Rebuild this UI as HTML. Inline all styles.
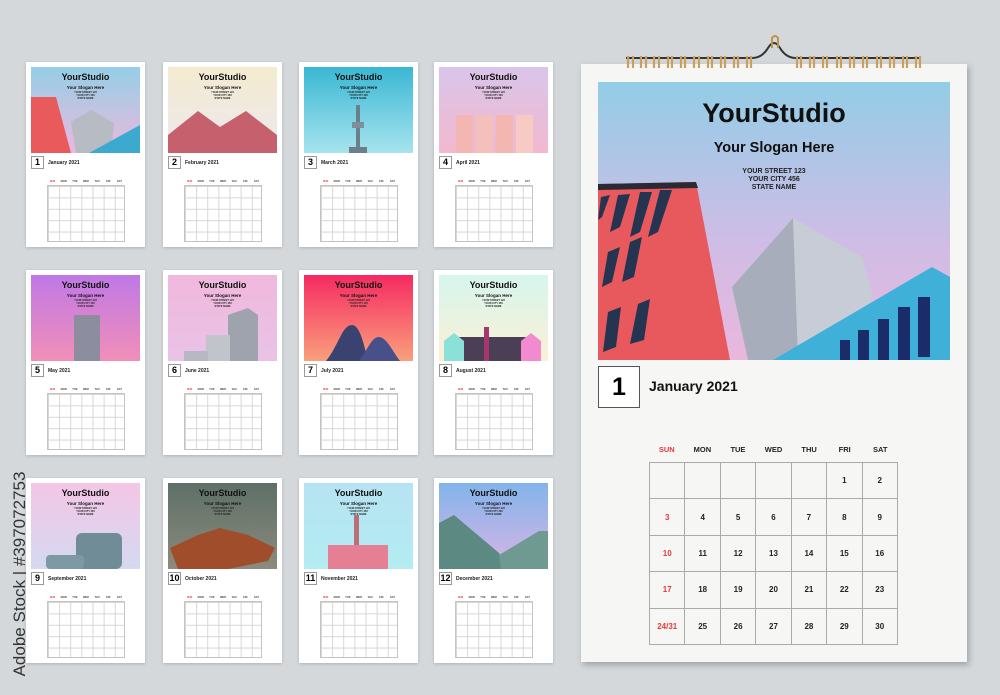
<!DOCTYPE html>
<html><head><meta charset="utf-8">
<style>
*{margin:0;padding:0;box-sizing:border-box}
body{width:1000px;height:695px;overflow:hidden;background:#d4d8db;font-family:"Liberation Sans",Arial,sans-serif;position:relative}
.card{position:absolute;width:119px;height:185px;background:#fff;box-shadow:0 1px 3px rgba(0,0,0,.18)}
.card svg.ph{position:absolute;left:5px;top:5px;width:109px;height:86px}
.card .t{position:absolute;left:5px;top:10px;width:109px;text-align:center;font-weight:bold;font-size:9px;color:#111}
.card .s{position:absolute;left:5px;top:23px;width:109px;text-align:center;font-weight:bold;font-size:4.5px;color:#111}
.card .a{position:absolute;left:5px;top:30px;width:109px;text-align:center;font-weight:bold;font-size:2.5px;line-height:2.8px;color:#222}
.card .n{position:absolute;left:5px;top:94px;width:13px;height:13px;border:1px solid #999;font-weight:bold;font-size:9px;text-align:center;line-height:11px;background:#fff}
.card .m{position:absolute;left:22px;top:98px;font-weight:bold;font-size:5px;color:#222}
.card .h{position:absolute;left:21px;top:118px;width:78px;height:3px;display:flex}
.card .h span{flex:1;font-size:2.6px;text-align:center;color:#444;font-weight:bold}
.card .h span:first-child{color:#e33}
.card .g{position:absolute;left:21px;top:123px;width:78px;height:57px;border:1px solid #c4c4c4;
background-image:linear-gradient(to right,#d6d6d6 1px,transparent 1px),linear-gradient(to bottom,#d6d6d6 1px,transparent 1px);background-size:11.14px 11.4px}
#main{position:absolute;left:581px;top:64px;width:386px;height:598px;background:#f6f6f5;box-shadow:2px 3px 6px rgba(0,0,0,.25)}
.grid{position:absolute;left:649px;top:462px;width:249px;height:182px;border-collapse:collapse}
.grid td{border:1.5px solid #aaa;width:35.6px;height:36.4px;text-align:center;font-weight:bold;font-size:8px;color:#222}
.grid td.r{color:#e03a3a}
.hd{position:absolute;left:649px;top:445px;width:249px;display:flex}
.hd span{flex:1;text-align:center;font-weight:bold;font-size:7.5px;color:#222}
.hd span:first-child{color:#e03a3a}
</style></head><body>

<div style="position:absolute;left:8px;top:458px;width:24px;height:232px">
<div style="position:absolute;left:12px;top:116px;transform:translate(-50%,-50%) rotate(-90deg);white-space:nowrap;font-family:'Liberation Sans',sans-serif;font-size:17px;color:#333">Adobe Stock | #397072753</div></div>

<svg width="0" height="0" style="position:absolute"><defs>
<linearGradient id="g1" x1="0" y1="0" x2="0" y2="1"><stop offset="0" stop-color="#95cfe6"/><stop offset="1" stop-color="#ebb8de"/></linearGradient>
<linearGradient id="g2" x1="0" y1="0" x2="0" y2="1"><stop offset="0" stop-color="#f4ebcf"/><stop offset="1" stop-color="#ece8f0"/></linearGradient>
<linearGradient id="g3" x1="0" y1="0" x2="0" y2="1"><stop offset="0" stop-color="#3ab7d3"/><stop offset="1" stop-color="#a6e4ee"/></linearGradient>
<linearGradient id="g4" x1="0" y1="0" x2="0" y2="1"><stop offset="0" stop-color="#d9c5ea"/><stop offset="1" stop-color="#f2b8cf"/></linearGradient>
<linearGradient id="g5" x1="0" y1="0" x2="0" y2="1"><stop offset="0" stop-color="#bf78e6"/><stop offset="1" stop-color="#f28fb8"/></linearGradient>
<linearGradient id="g6" x1="0" y1="0" x2="0" y2="1"><stop offset="0" stop-color="#f0b8dc"/><stop offset="1" stop-color="#e9c3e6"/></linearGradient>
<linearGradient id="g7" x1="0" y1="0" x2="0" y2="1"><stop offset="0" stop-color="#f62a62"/><stop offset="1" stop-color="#f9a07c"/></linearGradient>
<linearGradient id="g8" x1="0" y1="0" x2="0" y2="1"><stop offset="0" stop-color="#d6f6ee"/><stop offset="1" stop-color="#fbf0d4"/></linearGradient>
<linearGradient id="g9" x1="0" y1="0" x2="0" y2="1"><stop offset="0" stop-color="#f3c6e5"/><stop offset="1" stop-color="#d5d9f2"/></linearGradient>
<linearGradient id="g10" x1="0" y1="0" x2="0" y2="1"><stop offset="0" stop-color="#5d7068"/><stop offset="1" stop-color="#8c8a7c"/></linearGradient>
<linearGradient id="g11" x1="0" y1="0" x2="0" y2="1"><stop offset="0" stop-color="#b6e3f3"/><stop offset="1" stop-color="#b4ecf1"/></linearGradient>
<linearGradient id="g12" x1="0" y1="0" x2="0" y2="1"><stop offset="0" stop-color="#82b4ea"/><stop offset="1" stop-color="#d8b4e6"/></linearGradient>
</defs></svg>

<!-- Row 1 -->
<div class="card" style="left:26px;top:62px"><svg class="ph" viewBox="0 0 109 86"><rect width="109" height="86" fill="url(#g1)"/><polygon points="0,30 25,30 40,86 0,86" fill="#e95a5c"/><polygon points="40,55 60,43 83,56 80,86 45,86" fill="#b7bcc4"/><polygon points="58,86 109,58 109,86" fill="#3ca9cf"/></svg>
<div class="t">YourStudio</div><div class="s">Your Slogan Here</div><div class="a">YOUR STREET 123<br>YOUR CITY 456<br>STATE NAME</div>
<div class="n">1</div><div class="m">January 2021</div><div class="h"><span>SUN</span><span>MON</span><span>TUE</span><span>WED</span><span>THU</span><span>FRI</span><span>SAT</span></div><div class="g"></div></div>

<div class="card" style="left:163px;top:62px"><svg class="ph" viewBox="0 0 109 86"><rect width="109" height="86" fill="url(#g2)"/><polygon points="0,68 30,44 52,60 78,44 109,68 109,86 0,86" fill="#c5606c"/></svg>
<div class="t">YourStudio</div><div class="s">Your Slogan Here</div><div class="a">YOUR STREET 123<br>YOUR CITY 456<br>STATE NAME</div>
<div class="n">2</div><div class="m">February 2021</div><div class="h"><span>SUN</span><span>MON</span><span>TUE</span><span>WED</span><span>THU</span><span>FRI</span><span>SAT</span></div><div class="g"></div></div>

<div class="card" style="left:299px;top:62px"><svg class="ph" viewBox="0 0 109 86"><rect width="109" height="86" fill="url(#g3)"/><rect x="52" y="38" width="4" height="48" fill="#6a7f8a"/><rect x="48" y="55" width="12" height="6" fill="#7d8f98"/><rect x="45" y="80" width="18" height="6" fill="#6a7f8a"/></svg>
<div class="t">YourStudio</div><div class="s">Your Slogan Here</div><div class="a">YOUR STREET 123<br>YOUR CITY 456<br>STATE NAME</div>
<div class="n">3</div><div class="m">March 2021</div><div class="h"><span>SUN</span><span>MON</span><span>TUE</span><span>WED</span><span>THU</span><span>FRI</span><span>SAT</span></div><div class="g"></div></div>

<div class="card" style="left:434px;top:62px"><svg class="ph" viewBox="0 0 109 86"><rect width="109" height="86" fill="url(#g4)"/><rect x="17" y="48" width="17" height="38" fill="#f3b6b0"/><rect x="37" y="48" width="17" height="38" fill="#f5c0bb"/><rect x="57" y="48" width="17" height="38" fill="#f3b6b0"/><rect x="77" y="48" width="17" height="38" fill="#f7cac4"/></svg>
<div class="t">YourStudio</div><div class="s">Your Slogan Here</div><div class="a">YOUR STREET 123<br>YOUR CITY 456<br>STATE NAME</div>
<div class="n">4</div><div class="m">April 2021</div><div class="h"><span>SUN</span><span>MON</span><span>TUE</span><span>WED</span><span>THU</span><span>FRI</span><span>SAT</span></div><div class="g"></div></div>

<!-- Row 2 -->
<div class="card" style="left:26px;top:270px"><svg class="ph" viewBox="0 0 109 86"><rect width="109" height="86" fill="url(#g5)"/><rect x="43" y="40" width="26" height="46" fill="#8c8ea0"/></svg>
<div class="t">YourStudio</div><div class="s">Your Slogan Here</div><div class="a">YOUR STREET 123<br>YOUR CITY 456<br>STATE NAME</div>
<div class="n">5</div><div class="m">May 2021</div><div class="h"><span>SUN</span><span>MON</span><span>TUE</span><span>WED</span><span>THU</span><span>FRI</span><span>SAT</span></div><div class="g"></div></div>

<div class="card" style="left:163px;top:270px"><svg class="ph" viewBox="0 0 109 86"><rect width="109" height="86" fill="url(#g6)"/><polygon points="60,40 80,33 90,40 90,86 60,86" fill="#9ea3ad"/><rect x="38" y="60" width="24" height="26" fill="#c1c4cb"/><rect x="16" y="76" width="24" height="10" fill="#b6b9c2"/></svg>
<div class="t">YourStudio</div><div class="s">Your Slogan Here</div><div class="a">YOUR STREET 123<br>YOUR CITY 456<br>STATE NAME</div>
<div class="n">6</div><div class="m">June 2021</div><div class="h"><span>SUN</span><span>MON</span><span>TUE</span><span>WED</span><span>THU</span><span>FRI</span><span>SAT</span></div><div class="g"></div></div>

<div class="card" style="left:299px;top:270px"><svg class="ph" viewBox="0 0 109 86"><rect width="109" height="86" fill="url(#g7)"/><path d="M22,86 C35,70 38,50 48,50 C56,50 60,70 64,86 Z" fill="#3a4270"/><path d="M55,86 C65,72 68,62 75,62 C82,62 88,75 96,86 Z" fill="#47508a"/></svg>
<div class="t">YourStudio</div><div class="s">Your Slogan Here</div><div class="a">YOUR STREET 123<br>YOUR CITY 456<br>STATE NAME</div>
<div class="n">7</div><div class="m">July 2021</div><div class="h"><span>SUN</span><span>MON</span><span>TUE</span><span>WED</span><span>THU</span><span>FRI</span><span>SAT</span></div><div class="g"></div></div>

<div class="card" style="left:434px;top:270px"><svg class="ph" viewBox="0 0 109 86"><rect width="109" height="86" fill="url(#g8)"/><rect x="20" y="62" width="70" height="24" fill="#4a3f55"/><polygon points="5,86 5,66 15,58 25,66 25,86" fill="#8be0d8"/><polygon points="82,86 82,66 92,58 102,66 102,86" fill="#f28ad0"/><rect x="45" y="52" width="5" height="34" fill="#a8356f"/></svg>
<div class="t">YourStudio</div><div class="s">Your Slogan Here</div><div class="a">YOUR STREET 123<br>YOUR CITY 456<br>STATE NAME</div>
<div class="n">8</div><div class="m">August 2021</div><div class="h"><span>SUN</span><span>MON</span><span>TUE</span><span>WED</span><span>THU</span><span>FRI</span><span>SAT</span></div><div class="g"></div></div>

<!-- Row 3 -->
<div class="card" style="left:26px;top:478px"><svg class="ph" viewBox="0 0 109 86"><rect width="109" height="86" fill="url(#g9)"/><rect x="45" y="50" width="46" height="36" rx="6" fill="#6f8c97"/><rect x="15" y="72" width="38" height="14" rx="4" fill="#7d9aa4"/></svg>
<div class="t">YourStudio</div><div class="s">Your Slogan Here</div><div class="a">YOUR STREET 123<br>YOUR CITY 456<br>STATE NAME</div>
<div class="n">9</div><div class="m">September 2021</div><div class="h"><span>SUN</span><span>MON</span><span>TUE</span><span>WED</span><span>THU</span><span>FRI</span><span>SAT</span></div><div class="g"></div></div>

<div class="card" style="left:163px;top:478px"><svg class="ph" viewBox="0 0 109 86"><rect width="109" height="86" fill="url(#g10)"/><polygon points="2,65 30,52 52,45 80,52 107,65 100,78 60,86 10,86" fill="#a04d2c"/></svg>
<div class="t">YourStudio</div><div class="s">Your Slogan Here</div><div class="a">YOUR STREET 123<br>YOUR CITY 456<br>STATE NAME</div>
<div class="n">10</div><div class="m">October 2021</div><div class="h"><span>SUN</span><span>MON</span><span>TUE</span><span>WED</span><span>THU</span><span>FRI</span><span>SAT</span></div><div class="g"></div></div>

<div class="card" style="left:299px;top:478px"><svg class="ph" viewBox="0 0 109 86"><rect width="109" height="86" fill="url(#g11)"/><rect x="50" y="32" width="5" height="40" fill="#b96e78"/><rect x="24" y="62" width="60" height="24" fill="#e67f94"/></svg>
<div class="t">YourStudio</div><div class="s">Your Slogan Here</div><div class="a">YOUR STREET 123<br>YOUR CITY 456<br>STATE NAME</div>
<div class="n">11</div><div class="m">November 2021</div><div class="h"><span>SUN</span><span>MON</span><span>TUE</span><span>WED</span><span>THU</span><span>FRI</span><span>SAT</span></div><div class="g"></div></div>

<div class="card" style="left:434px;top:478px"><svg class="ph" viewBox="0 0 109 86"><rect width="109" height="86" fill="url(#g12)"/><polygon points="0,40 15,32 60,70 70,86 0,86" fill="#5c8a83"/><polygon points="60,72 100,48 109,48 109,86 62,86" fill="#6f9a92"/></svg>
<div class="t">YourStudio</div><div class="s">Your Slogan Here</div><div class="a">YOUR STREET 123<br>YOUR CITY 456<br>STATE NAME</div>
<div class="n">12</div><div class="m">December 2021</div><div class="h"><span>SUN</span><span>MON</span><span>TUE</span><span>WED</span><span>THU</span><span>FRI</span><span>SAT</span></div><div class="g"></div></div>

<!-- Main calendar -->
<div id="main"></div>
<svg style="position:absolute;left:0;top:0" width="1000" height="100">
<path d="M626,58 L752,58 Q762,58 768,48 Q774,38 780,48 Q786,58 796,58 L920,58" stroke="#333" stroke-width="2" fill="none"/>
<path d="M772,48 L772,38 Q775,34 778,38 L778,48" stroke="#b8964a" stroke-width="2" fill="none"/>
<g fill="none" stroke="#c9a060" stroke-width="2.2">
<path d="M628,56 v12 M633,56 v12 M641,56 v12 M646,56 v12 M654,56 v12 M659,56 v12 M668,56 v12 M672,56 v12 M681,56 v12 M685,56 v12 M694,56 v12 M699,56 v12 M708,56 v12 M712,56 v12 M721,56 v12 M725,56 v12 M734,56 v12 M738,56 v12 M747,56 v12 M751,56 v12"/>
<path d="M797,56 v12 M801,56 v12 M810,56 v12 M814,56 v12 M823,56 v12 M827,56 v12 M837,56 v12 M841,56 v12 M850,56 v12 M854,56 v12 M863,56 v12 M867,56 v12 M877,56 v12 M881,56 v12 M890,56 v12 M894,56 v12 M903,56 v12 M907,56 v12 M916,56 v12 M920,56 v12"/>
</g></svg>

<svg style="position:absolute;left:598px;top:82px" width="352" height="278" viewBox="0 0 352 278">
<defs><linearGradient id="mg" x1="0" y1="0" x2="0" y2="1"><stop offset="0" stop-color="#93cde6"/><stop offset=".55" stop-color="#cdbde6"/><stop offset="1" stop-color="#eab7dd"/></linearGradient></defs>
<rect width="352" height="278" fill="url(#mg)"/>
<polygon points="134,205 195,136 264,175 275,215 240,278 150,278" fill="#c8ccd6"/>
<polygon points="134,205 195,136 200,278 150,278" fill="#a7adba"/>
<polygon points="0,102 98,100 132,278 0,278" fill="#e8595d"/>
<polygon points="0,102 98,100 100,106 0,108" fill="#2a2a35"/>
<g fill="#253450"><polygon points="3,115 12,113 4,135 0,138"/><polygon points="20,113 32,112 22,145 12,150"/><polygon points="42,110 54,110 42,150 32,155"/><polygon points="62,108 74,108 60,150 50,155"/><polygon points="10,170 22,165 14,200 4,205"/><polygon points="32,160 44,155 36,195 24,200"/><polygon points="10,230 23,225 18,265 5,270"/><polygon points="40,222 52,217 46,258 32,262"/></g>
<polygon points="175,278 334,185 352,195 352,278" fill="#3fb0d8"/>
<g fill="#1a2d6a"><rect x="320" y="215" width="12" height="60"/><rect x="300" y="225" width="12" height="53"/><rect x="280" y="237" width="11" height="41"/><rect x="260" y="248" width="11" height="30"/><rect x="242" y="258" width="10" height="20"/></g>
</svg>
<div style="position:absolute;left:598px;top:98px;width:352px;text-align:center;font-weight:bold;font-size:27px;color:#111">YourStudio</div>
<div style="position:absolute;left:598px;top:140px;width:352px;text-align:center;font-weight:bold;font-size:14.5px;color:#111">Your Slogan Here</div>
<div style="position:absolute;left:598px;top:168px;width:352px;text-align:center;font-weight:bold;font-size:7px;line-height:8.2px;color:#222">YOUR STREET 123<br>YOUR CITY 456<br>STATE NAME</div>
<div style="position:absolute;left:598px;top:366px;width:42px;height:42px;border:1px solid #555;background:#fff;text-align:center;font-weight:bold;font-size:25px;line-height:40px">1</div>
<div style="position:absolute;left:649px;top:378px;font-weight:bold;font-size:14px;color:#111">January 2021</div>

<div class="hd"><span>SUN</span><span>MON</span><span>TUE</span><span>WED</span><span>THU</span><span>FRI</span><span>SAT</span></div>
<table class="grid">
<tr><td></td><td></td><td></td><td></td><td></td><td>1</td><td>2</td></tr>
<tr><td class="r">3</td><td>4</td><td>5</td><td>6</td><td>7</td><td>8</td><td>9</td></tr>
<tr><td class="r">10</td><td>11</td><td>12</td><td>13</td><td>14</td><td>15</td><td>16</td></tr>
<tr><td class="r">17</td><td>18</td><td>19</td><td>20</td><td>21</td><td>22</td><td>23</td></tr>
<tr><td class="r">24/31</td><td>25</td><td>26</td><td>27</td><td>28</td><td>29</td><td>30</td></tr>
</table>
</body></html>
